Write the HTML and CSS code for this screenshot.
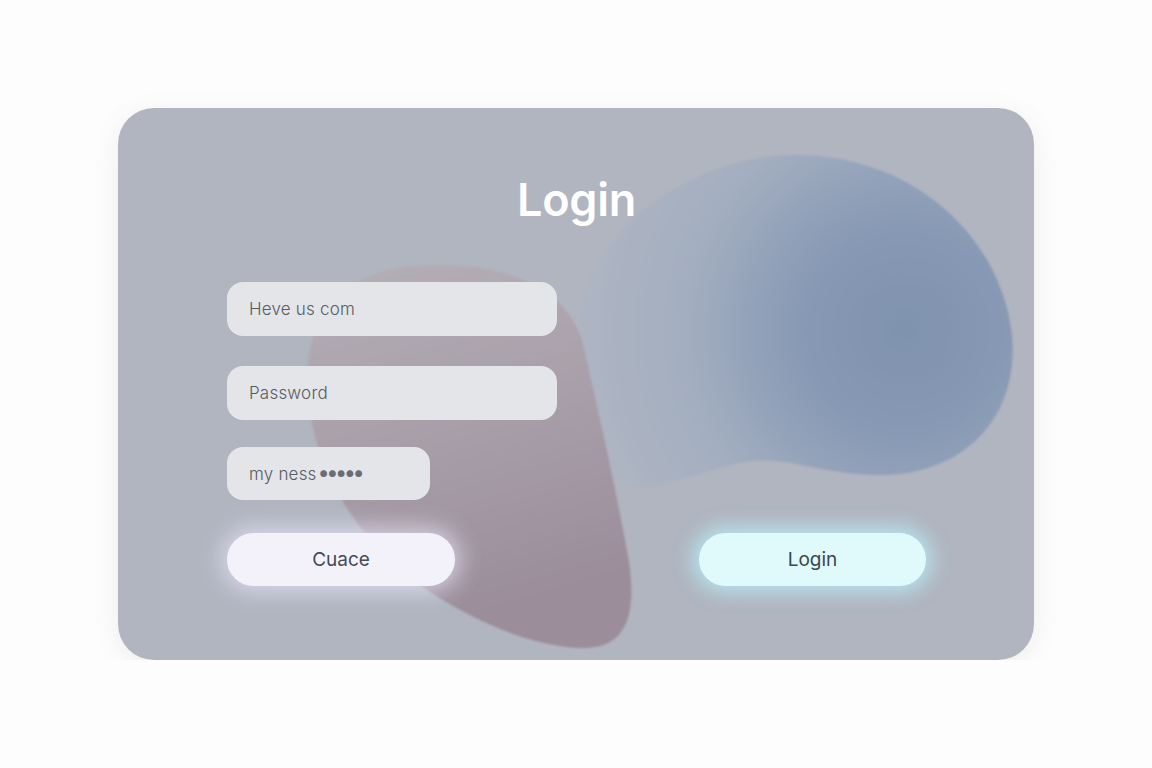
FILE: index.html
```html
<!DOCTYPE html>
<html lang="en">
<head>
    <meta charset="UTF-8">
    <meta name="viewport" content="width=device-width, initial-scale=1.0">
    <title>Login</title>
    <link rel="stylesheet" href="styles.css">
</head>
<body>
    <div class="page">
        <div class="card">
            <!-- fondo con manchas difusas -->
            <svg class="blobs" viewBox="118 108 916 552" preserveAspectRatio="none">
                <defs>
                    <linearGradient id="pink" x1="0" y1="0" x2="0.25" y2="1">
                        <stop offset="0" stop-color="#b5afb7"/>
                        <stop offset="0.5" stop-color="#a89fa9"/>
                        <stop offset="1" stop-color="#9b8d9a"/>
                    </linearGradient>
                    <radialGradient id="blue" cx="905" cy="330" r="340" gradientUnits="userSpaceOnUse">
                        <stop offset="0" stop-color="#7f92ae"/>
                        <stop offset="0.3" stop-color="#8799b4"/>
                        <stop offset="0.65" stop-color="#a3aec0"/>
                        <stop offset="1" stop-color="#b0b6c2"/>
                    </radialGradient>
                    <filter id="soft" x="-20%" y="-20%" width="140%" height="140%">
                        <feGaussianBlur stdDeviation="1.2"/>
                    </filter>
                </defs>
                <path filter="url(#soft)" fill="url(#blue)" d="M 790 155 C 905 152 1000 230 1012 335 C 1020 425 955 478 875 475 C 815 473 785 455 745 462 C 690 472 650 500 615 480 C 585 440 575 380 578 320 C 585 240 680 158 790 155 Z"/>
                <path filter="url(#soft)" fill="url(#pink)" d="M 425 265 C 500 262 565 285 582 340 C 598 410 612 470 625 540 C 640 610 630 650 580 648 C 530 646 470 620 420 585 C 360 540 318 480 308 400 C 300 320 340 268 425 265 Z"/>
            </svg>

            <h1 class="title">Login</h1>

            <div class="fields">
                <div class="field">Heve us com</div>
                <div class="field">Password</div>
                <div class="field short">my ness<span class="dots">●●●●●</span></div>
            </div>

            <div class="actions">
                <button class="btn cancel">Cuace</button>
                <button class="btn login">Login</button>
            </div>
        </div>
    </div>
</body>
</html>
```

FILE: styles.css
```css
body {
    margin: 0;
    background-color: #fdfdfd;
    font-family: Inter, "Noto Sans", sans-serif;
}
.page {
    padding-top: 108px;
    display: flex;
    justify-content: center;
}
.card {
    position: relative;
    width: 916px;
    height: 552px;
    box-sizing: border-box;
    padding: 66px 108px 0 109px;
    border-radius: 36px;
    background-color: #b0b5c0;
    box-shadow: 0 6px 24px rgba(120, 125, 140, 0.12);
    overflow: hidden;
    display: flex;
    flex-direction: column;
}
.blobs {
    position: absolute;
    left: 0;
    top: 0;
    width: 100%;
    height: 100%;
}
.title {
    position: relative;
    margin: 0;
    text-align: center;
    font-size: 45px;
    line-height: 52px;
    font-weight: 600;
    color: #ffffff;
    letter-spacing: -0.3px;
}
.fields {
    position: relative;
    margin-top: 56px;
    display: flex;
    flex-direction: column;
    align-items: flex-start;
}
.field {
    width: 330px;
    height: 54px;
    box-sizing: border-box;
    padding-left: 22px;
    display: flex;
    align-items: center;
    border-radius: 16px;
    background-color: #e4e5e9;
    color: #575b63;
    font-size: 17px;
    font-weight: 300;
    letter-spacing: 0.2px;
    margin-bottom: 30px;
}
.field:nth-child(2) {
    margin-bottom: 27px;
}
.field.short {
    width: 203px;
    height: 53px;
    margin-bottom: 0;
}
.dots {
    font-size: 9px;
    letter-spacing: 0.5px;
    color: #6a6d75;
    margin-left: 3px;
}
.actions {
    position: relative;
    margin-top: 33px;
    display: flex;
    justify-content: space-between;
}
.btn {
    width: 228px;
    height: 53px;
    border: none;
    border-radius: 27px;
    font-family: Inter, "Noto Sans", sans-serif;
    font-size: 19px;
    font-weight: 400;
    color: #454a55;
}
.cancel {
    background-color: #f3f2fb;
    box-shadow: 0 0 22px 6px rgba(234, 228, 250, 0.7);
}
.login {
    width: 227px;
    background-color: #e0fafb;
    color: #3a4650;
    box-shadow: 0 0 20px 6px rgba(185, 240, 250, 0.8);
}
```
